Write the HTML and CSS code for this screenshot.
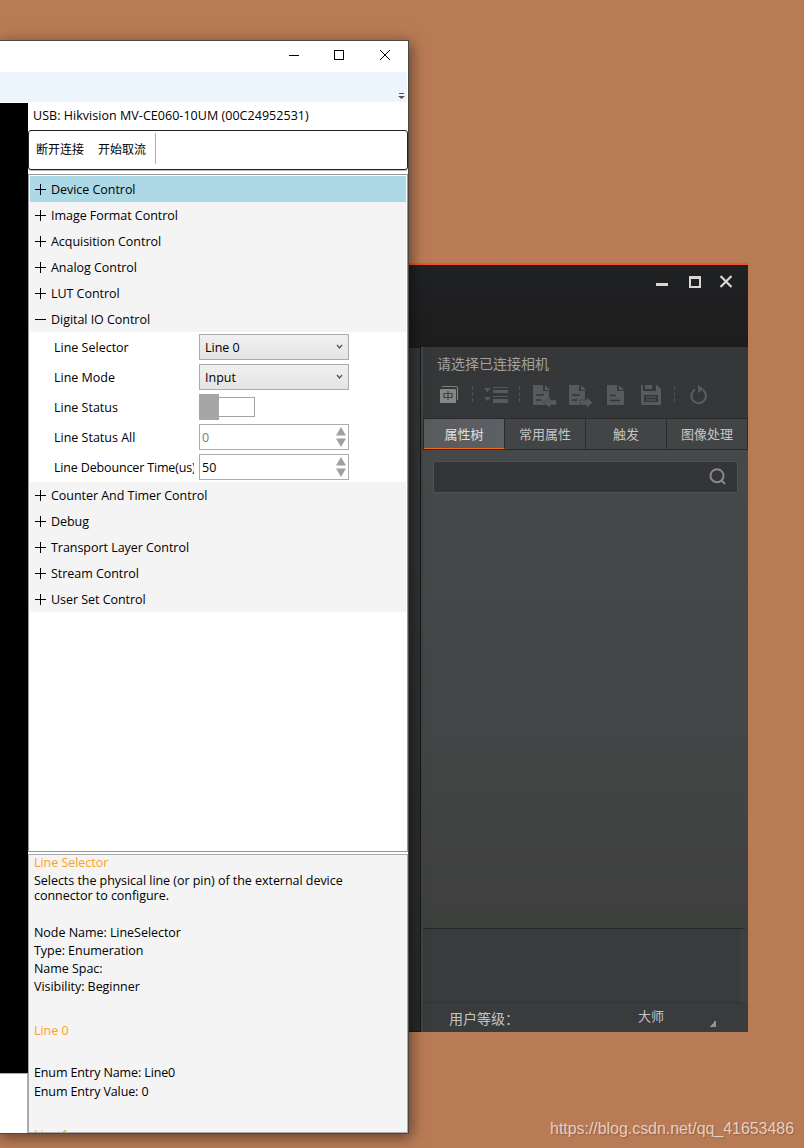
FILE: index.html
```
<!DOCTYPE html>
<html lang="zh-CN">
<head>
<meta charset="utf-8">
<title>Camera Control</title>
<link rel="stylesheet" href="styles.css">
</head>
<body>
<div class="desktop">
  <section class="window dark">
    <header class="dark-title">
      <svg width="90" height="20" viewBox="0 0 90 20" fill="none" stroke="#dad7d3">
        <path d="M3 13.500h12" stroke-width="3"/>
        <path d="M37 7h10v9H37z" stroke-width="2"/><path d="M36 6.500h12" stroke-width="3"/>
        <path d="M67.500 5l11 11M78.500 5l-11 11" stroke-width="2.200"/>
      </svg>
    </header>
    <div class="dark-body">
      <div class="dark-gutter"></div>
      <div class="dark-panel">
        <div class="prompt">请选择已连接相机</div>
        <div class="icons">
          <svg width="300" height="24" viewBox="0 0 300 24" fill="#58595b">
            <path d="M5 1.500h13.500q2 0 2 2V15" fill="none" stroke="#7e7f80" stroke-width="1.200"/>
            <rect x="3" y="4" width="16" height="14" rx="1" fill="#858686"/>
            <path d="M7 8.500h8v4H7zM11 6v9" fill="none" stroke="#414243" stroke-width="1.200"/>
            <path d="M35.500 1v18M82.500 1v18M237.500 1v18" stroke="#505153" stroke-dasharray="4 2"/>
            <path d="M47 3h7l-3.500 4zM47 12h7l-3.500 4zM56 2h15v1H56zM56 5h15v3H56zM56 11h15v1H56zM56 14h15v4H56z"/>
            <path d="M96 0h10v6h6v14H96z"/>
            <path d="M108 0l5 5h-5z"/>
            <path d="M99 10h8M99 15h5" stroke="#353637" stroke-width="1.500"/>
            <path d="M106.500 17.500l7-6v3.500h6v5h-6v3.500z" stroke="#353637" stroke-width=".5"/>
            <path d="M132 0h10v6h6v14h-16z"/><path d="M144 0l5 5h-5z"/>
            <path d="M135 10h8M135 15h5" stroke="#353637" stroke-width="1.500"/>
            <path d="M155.500 17.500l-6-5.500v3H143v5h6.500v3z" stroke="#353637" stroke-width=".5"/>
            <path d="M170 0h10v6h7v14h-17z"/><path d="M182 0l5 5h-5z"/>
            <path d="M173 10.500h6M173 15.500h10" stroke="#353637" stroke-width="1.500"/>
            <path d="M204 0h2v6h13V0h1l4 4v16h-20zM208 0h7v4h-7z"/>
            <path d="M207 10h14v7h-14z" fill="#353637"/><path d="M209 12h10M209 15h10" stroke="#606163"/>
            <path d="M258 4.500A7.300 7.300 0 1 0 266 5" fill="none" stroke="#5c5d5f" stroke-width="2"/>
            <path d="M261 0l6 4-6 4z"/>
          </svg>
        </div>
        <nav class="tabs"><span class="on">属性树</span><span>常用属性</span><span>触发</span><span>图像处理</span></nav>
        <div class="search"><svg width="20" height="20" viewBox="0 0 20 20" fill="none" stroke="#89898b" stroke-width="2"><circle cx="9" cy="8.700" r="6.500"/><path d="M13.500 13.500l3.500 3.500"/></svg></div>
        <div class="empty"></div>
        <div class="lower"></div>
        <footer class="level"><span class="level-label">用户等级：</span><span class="level-value">大师</span><i class="corner"></i></footer>
      </div>
    </div>
  </section>

  <section class="window light">
    <header class="title">
      <svg width="120" height="20" viewBox="0 0 120 20" fill="none" stroke="#000">
        <path d="M9 10.500h10M54.500 5.500h9v9h-9z" shape-rendering="crispEdges"/>
        <path d="M100 5l10 10M110 5l-10 10"/>
      </svg>
    </header>
    <div class="ribbon"><svg width="7" height="7" viewBox="0 0 7 7" fill="#555"><path d="M1 0h5v1H1zM0 3h7L3.500 6z"/></svg></div>
    <div class="main">
      <aside class="view"><div class="black"></div><div class="blank"></div></aside>
      <div class="panel">
        <div class="device">USB: Hikvision MV-CE060-10UM (00C24952531)</div>
        <div class="toolbar"><span>断开连接</span><span>开始取流</span><i></i></div>
        <div class="tree">
          <div class="row sel"><i class="plus"></i>Device Control</div>
          <div class="row"><i class="plus"></i>Image Format Control</div>
          <div class="row"><i class="plus"></i>Acquisition Control</div>
          <div class="row"><i class="plus"></i>Analog Control</div>
          <div class="row"><i class="plus"></i>LUT Control</div>
          <div class="row"><i class="minus"></i>Digital IO Control</div>
          <div class="prop"><label>Line Selector</label><div class="combo">Line 0<svg width="7" height="6" viewBox="0 0 7 6"><path d="M1 1l2.500 3L6 1" fill="none" stroke="#555" stroke-width="1.300"/></svg></div></div>
          <div class="prop"><label>Line Mode</label><div class="combo">Input<svg width="7" height="6" viewBox="0 0 7 6"><path d="M1 1l2.500 3L6 1" fill="none" stroke="#555" stroke-width="1.300"/></svg></div></div>
          <div class="prop"><label>Line Status</label><div class="switch"><b></b><i></i></div></div>
          <div class="prop"><label>Line Status All</label><div class="spin off">0<svg width="10" height="20" viewBox="0 0 10 20" fill="#a0a0a0"><path d="M0 8.500L5 0l5 8.500zM0 11.500h10L5 20z"/></svg></div></div>
          <div class="prop"><label class="tight">Line Debouncer Time(us)</label><div class="spin">50<svg width="10" height="20" viewBox="0 0 10 20" fill="#a0a0a0"><path d="M0 8.500L5 0l5 8.500zM0 11.500h10L5 20z"/></svg></div></div>
          <div class="row"><i class="plus"></i>Counter And Timer Control</div>
          <div class="row"><i class="plus"></i>Debug</div>
          <div class="row"><i class="plus"></i>Transport Layer Control</div>
          <div class="row"><i class="plus"></i>Stream Control</div>
          <div class="row"><i class="plus"></i>User Set Control</div>
        </div>
        <div class="info">
          <h4>Line Selector</h4>
          <p class="desc">Selects the physical line (or pin) of the external device<br>connector to configure.</p>
          <p>Node Name: LineSelector</p>
          <p>Type: Enumeration</p>
          <p>Name Spac:</p>
          <p>Visibility: Beginner</p>
          <h4 class="entry">Line 0</h4>
          <p class="enum">Enum Entry Name: Line0</p>
          <p class="enum">Enum Entry Value: 0</p>
          <h4 class="entry next">Line 1</h4>
        </div>
      </div>
    </div>
  </section>
  <div class="watermark">https://blog.csdn.net/qq_41653486</div>
</div>
</body>
</html>
```
FILE: styles.css
```
* { box-sizing: border-box; }
body { margin: 0; }
.desktop {
  position: relative; width: 804px; height: 1148px; overflow: hidden;
  background: #b97b55; color: #000;
  font: 12.5px "Open Sans", "Noto Sans CJK SC", sans-serif;
}
.window { position: absolute; display: flex; flex-direction: column; }
svg { display: block; flex: none; }

.light {
  left: -2px; top: 40px; width: 411px; height: 1094px;
  background: #fff; border: 1px solid #4f4541;
  box-shadow: 2px 3px 14px rgba(0,0,0,.5);
}
.title { height: 31px; display: flex; justify-content: flex-end; padding: 4px 8px 0 0; }
.ribbon {
  height: 30px; margin-right: 1px; background: #edf5fe; border-radius: 0 2px 2px 0;
  display: flex; justify-content: flex-end; align-items: flex-end; padding: 0 2px 2px;
}
.main { flex: 1; display: flex; min-height: 0; padding-top: 1px; }
.view { width: 29px; display: flex; flex-direction: column; }
.black { height: 970px; background: #000; }
.blank { flex: 1; border-top: 1px solid #ababb0; border-right: 1px solid #ababb0; }
.panel { flex: 1; display: flex; flex-direction: column; min-width: 0; }
.device { height: 27px; line-height: 26px; padding-left: 5px; white-space: nowrap; letter-spacing: .04px; }
.toolbar {
  height: 40px; border: 1px solid #222; border-radius: 3px; box-shadow: 0 1px #bbb;
  display: flex; align-items: center; padding: 0 7px 3px; font-size: 12px;
  font-family: "Noto Sans CJK SC", sans-serif;
}
.toolbar span { width: 48px; margin-right: 14px; white-space: nowrap; }
.toolbar span + span { margin-right: 9px; }
.toolbar i { width: 1px; height: 31px; background: #adb2ba; }
.tree { height: 678px; margin-top: 4px; border: 1px solid #93959c; padding: 1px; }
.row { height: 26px; background: #f4f4f4; display: flex; align-items: center; padding: 1px 0 0 5px; white-space: nowrap; letter-spacing: -.04px; }
.sel { background: #add8e6; }
.plus, .minus { width: 11px; height: 11px; margin: 0 5px 1px 0; background: linear-gradient(#000,#000) center/11px 1px no-repeat; }
.plus { background: linear-gradient(#000,#000) center/11px 1px no-repeat, linear-gradient(#000,#000) center/1px 11px no-repeat; }
.prop { height: 30px; display: flex; align-items: center; padding-left: 24px; }
.prop label { width: 140px; margin-right: 5px; overflow: hidden; white-space: nowrap; }
.prop .tight { letter-spacing: -.16px; }
.combo, .spin { width: 150px; height: 26px; border: 1px solid #acacac; display: flex; align-items: center; justify-content: space-between; }
.combo { padding: 0 5px; background: linear-gradient(#f0f0f0, #e4e4e4); }
.spin { padding: 0 2px; }
.off { color: #777; }
.switch { display: flex; align-items: center; }
.switch b { width: 20px; height: 26px; background: #a6a6a6; }
.switch i { width: 36px; height: 20px; border: 1px solid #a3a3a3; border-left: 0; }
.info { flex: 1; margin-top: 2px; border: 1px solid #a8aab0; background: #f4f4f4; padding-left: 5px; overflow: hidden; white-space: nowrap; letter-spacing: -.04px; }
.info h4, .info p { margin: 0; font-weight: 400; height: 18px; line-height: 16px; }
.info h4 { color: #ffa01c; }
.info .desc { height: 52px; line-height: 15px; }
.info .entry { margin-top: 26px; height: 42px; }
.info .enum { height: 19px; letter-spacing: -.12px; }
.info .next { margin-top: 24px; }

.dark { left: 408px; top: 263px; width: 340px; height: 769px; background: #393a3b; border-top: 2px solid #f1512f; }
.dark-title { height: 82px; background: linear-gradient(#202123, #1d1d1d); display: flex; justify-content: flex-end; padding: 6px 5px 0 0; }
.dark-body { flex: 1; display: flex; }
.dark-gutter { flex: none; width: 13px; background: linear-gradient(#353637, #272828); border: solid #171819; border-width: 1px 1px 1px 0; }
.dark-panel { flex: 1; min-width: 0; border-left: 2px solid #424344; display: flex; flex-direction: column; background: linear-gradient(#363738, #353637 70px, #47484a 90px, #444546 380px, #3e403e 580px); color: #c4c4c4; font-family: "Noto Sans CJK SC", sans-serif; }
.prompt { height: 34px; padding: 4px 0 0 14px; font-size: 14px; line-height: 24px; color: #a1a1a1; }
.icons { height: 37px; padding: 4px 0 0 14px; }
.tabs { height: 32px; display: flex; border: 1px solid #292a2b; border-right: 0; font-size: 13px; }
.tabs span { flex: 1; line-height: 30px; text-align: center; background: #434446; border-right: 1px solid #292a2b; }
.tabs .on { background: linear-gradient(90deg, #5a5b5d, #5c5f64); border-bottom: 1px solid #f26a12; color: #e2e2e2; }
.search { width: 305px; height: 32px; margin: 11px 0 0 10px; border: 1px solid #505154; border-radius: 2px; background: #343536; display: flex; justify-content: flex-end; align-items: center; padding-right: 9px; }
.empty { flex: 1; }
.lower { height: 75px; background: #3a3b3c; border-top: 1px solid #242525; border-bottom: 1px solid #333435; border-right: 8px solid #3e3f40; }
.level { height: 29px; background: #3a3b3c; display: flex; }
.level-label { padding-left: 26px; width: 215px; font-size: 14px; line-height: 30px; }
.level-value { width: 71px; font-size: 13px; line-height: 26px; }
.corner { width: 7px; height: 7px; margin-top: 17px; background: linear-gradient(135deg, transparent 50%, #929292 50%); }

.watermark { position: absolute; right: 10px; bottom: 9px; font: 16px/20px "Liberation Sans", sans-serif; letter-spacing: -.05px; color: rgba(255,255,255,.68); text-shadow: 1px 1px 1px rgba(80,40,20,.35); }
```
